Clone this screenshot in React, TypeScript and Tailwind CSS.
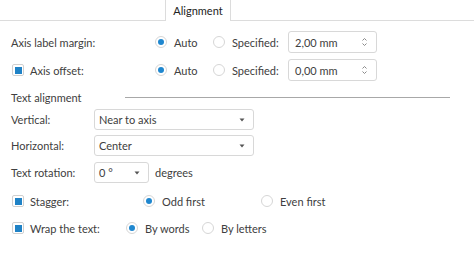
import React from "react";

function Radio({ checked }: { checked?: boolean }) {
  return (
    <span className="w-[12px] h-[12px] rounded-full border border-[#d6d6d6] bg-white flex items-center justify-center shrink-0">
      {checked && <span className="w-[6px] h-[6px] rounded-full bg-[#1f87cf]" />}
    </span>
  );
}

function Check() {
  return (
    <span className="w-[12px] h-[12px] rounded-[2px] border border-[#d0d0d0] bg-white flex items-center justify-center shrink-0">
      <span className="w-[7px] h-[7px] bg-[#1f82c6]" />
    </span>
  );
}

function Option({ checked, label, w }: { checked?: boolean; label: string; w: string }) {
  return (
    <div className={`flex items-center gap-[7px] ${w}`}>
      <Radio checked={checked} />
      <span>{label}</span>
    </div>
  );
}

function Spin({ value }: { value: string }) {
  return (
    <div className="w-[89px] h-[22px] border border-[#d8d8d8] rounded-[3px] flex items-center justify-between pl-[6px] pr-[8px]">
      <span>{value}</span>
      <svg width="7" height="10" viewBox="0 0 7 10" className="text-[#8a8a8a]">
        <path d="M1.5 3.5 L3.5 1.5 L5.5 3.5" fill="none" stroke="currentColor" strokeWidth="1" />
        <path d="M1.5 6.5 L3.5 8.5 L5.5 6.5" fill="none" stroke="currentColor" strokeWidth="1" />
      </svg>
    </div>
  );
}

function Combo({ value, w }: { value: string; w: string }) {
  return (
    <div className={`${w} h-[21px] border border-[#d8d8d8] rounded-[3px] flex items-center justify-between pl-[4px] pr-[8px]`}>
      <span>{value}</span>
      <svg width="6" height="4" viewBox="0 0 6 4">
        <path d="M0.5 0.5 L5.5 0.5 L3 3.5 Z" fill="#555" />
      </svg>
    </div>
  );
}

export default function App() {
  return (
    <div className="w-[474px] h-[262px] bg-white text-[#404040] text-[11px] leading-none font-['Lato',sans-serif] overflow-hidden">
      {/* Tabs */}
      <div className="h-[21px] border-b border-[#dcdcdc] flex">
        <div className="ml-[165px] w-[66px] h-[21px] bg-white border-x border-[#dcdcdc] flex items-center justify-center text-[#222]">
          Alignment
        </div>
      </div>

      <div className="px-[11px]">
        <div className="mt-[10px] h-[22px] flex items-center">
          <span className="w-[144px]">Axis label margin:</span>
          <Option checked label="Auto" w="w-[58px]" />
          <Option label="Specified:" w="w-[75px]" />
          <Spin value="2,00 mm" />
        </div>

        <div className="mt-[6px] h-[22px] flex items-center">
          <div className="w-[144px] flex items-center gap-[6px] pl-px">
            <Check />
            <span>Axis offset:</span>
          </div>
          <Option checked label="Auto" w="w-[58px]" />
          <Option label="Specified:" w="w-[75px]" />
          <Spin value="0,00 mm" />
        </div>

        <div className="mt-[8px] h-[16px] flex items-center">
          <span className="w-[114px]">Text alignment</span>
          <div className="w-[325px] h-px bg-[#a8a8a8]" />
        </div>

        <div className="mt-[4px] h-[21px] flex items-center">
          <span className="w-[83px]">Vertical:</span>
          <Combo value="Near to axis" w="w-[160px]" />
        </div>

        <div className="mt-[5px] h-[21px] flex items-center">
          <span className="w-[83px]">Horizontal:</span>
          <Combo value="Center" w="w-[160px]" />
        </div>

        <div className="mt-[6px] h-[21px] flex items-center">
          <span className="w-[83px]">Text rotation:</span>
          <Combo value="0 °" w="w-[55px]" />
          <span className="ml-[6px]">degrees</span>
        </div>

        <div className="mt-[7px] h-[22px] flex items-center">
          <div className="w-[132px] flex items-center gap-[6px] pl-px">
            <Check />
            <span>Stagger:</span>
          </div>
          <Option checked label="Odd first" w="w-[118px]" />
          <Option label="Even first" w="w-[80px]" />
        </div>

        <div className="mt-[5px] h-[22px] flex items-center">
          <div className="w-[115px] flex items-center gap-[6px] pl-px">
            <Check />
            <span>Wrap the text:</span>
          </div>
          <Option checked label="By words" w="w-[76px]" />
          <Option label="By letters" w="w-[80px]" />
        </div>
      </div>
    </div>
  );
}
